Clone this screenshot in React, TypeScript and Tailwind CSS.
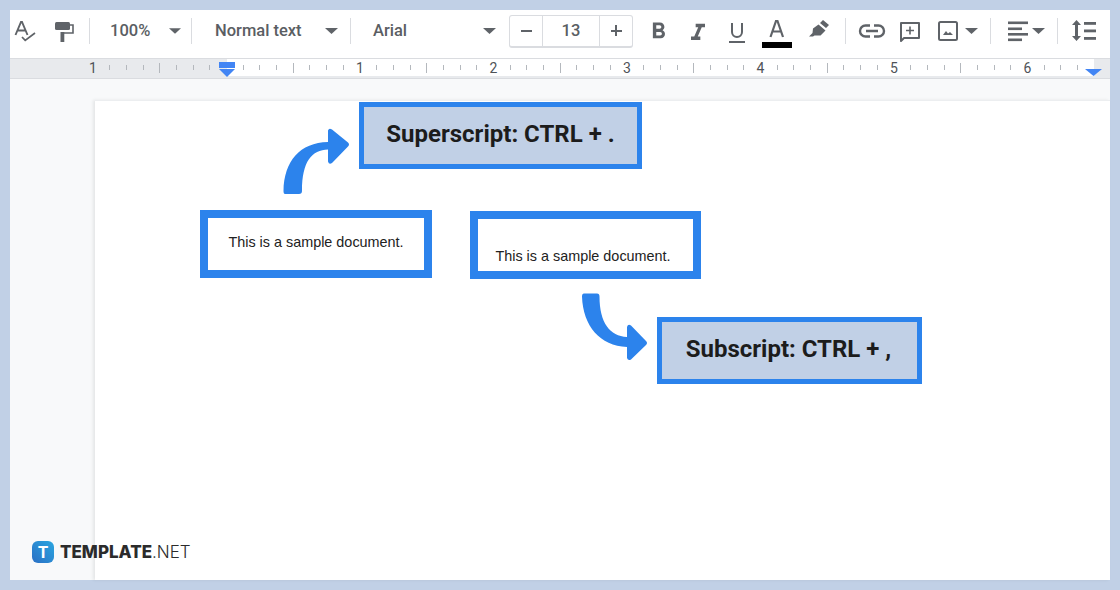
import React from "react";
import { MdFormatBold, MdFormatItalic } from "react-icons/md";

const G = "#5f6368";

function Icon({ x, w, className, children }: { x: number; w: number; className: string; children: React.ReactNode }) {
  return (
    <svg viewBox={`${x} 18 ${w} 26`} width={w} height={26} className={`shrink-0 ${className}`} fill={G} stroke="none">
      {children}
    </svg>
  );
}

function Divider({ className }: { className: string }) {
  return <div className={`h-[26px] w-px shrink-0 bg-[#dadce0] ${className}`} />;
}

function Caret({ className }: { className: string }) {
  return (
    <svg viewBox="0 0 13 6" width={13} height={6} className={`shrink-0 ${className}`} fill={G}>
      <path d="M0 0h13L6.5 6z" />
    </svg>
  );
}

function Label({ children, className }: { children: React.ReactNode; className: string }) {
  return (
    <span className={`shrink-0 whitespace-nowrap font-['Roboto',sans-serif] text-[16.5px] font-medium leading-none text-[#5a5e63] ${className}`}>
      {children}
    </span>
  );
}

const cells = Array.from({ length: 61 }, (_, i) => i);
const labels: Record<number, string> = { 0: "1", 16: "1", 24: "2", 32: "3", 40: "4", 48: "5", 56: "6" };

function Ruler() {
  return (
    <div className="relative h-[21px] shrink-0 border-y border-[#dadce0] bg-[#e8eaed]">
      <div className="absolute left-[217px] top-0 h-[17px] w-[867px] bg-white" />
      <div className="relative flex h-[17px] items-center pl-[74.6px]">
        {cells.map((i) => (
          <div key={i} className="flex h-full w-[16.69px] shrink-0 items-center justify-center">
            {labels[i] ? (
              <span className="font-['Roboto',sans-serif] text-[14px] leading-none text-[#4f5358]">{labels[i]}</span>
            ) : i === 8 || i === 60 ? null : i % 4 === 0 ? (
              <div className="h-[10px] w-px bg-[#b4b8bd]" />
            ) : (
              <div className="h-[5px] w-px bg-[#b4b8bd]" />
            )}
          </div>
        ))}
      </div>
      <svg viewBox="0 0 16 15" width={16} height={15} className="absolute left-[209px] top-[3px]" fill="#4285f4">
        <path d="M0 0h16v6H0zM0 7h16l-8 8z" />
      </svg>
      <svg viewBox="0 0 17 7" width={17} height={7} className="absolute left-[1075px] top-[10px]" fill="#4285f4">
        <path d="M0 0h17l-8.500 7z" />
      </svg>
    </div>
  );
}

function Toolbar() {
  return (
    <div className="flex h-[48px] shrink-0 items-center bg-white pb-[6px]">
      <Icon x={14} w={24} className="ml-[4px]">
        <path d="M15.5 35L21 22h1l5.500 13M17.500 30.500h8" fill="none" stroke={G} strokeWidth="1.9" />
        <path d="M22 37l3.200 3.400L35 33" fill="none" stroke={G} strokeWidth="1.7" />
      </Icon>
      <Icon x={52} w={24} className="ml-[14px]">
        <rect x="55" y="22" width="15" height="8" rx="1.500" />
        <path d="M70 25h3v8H62" fill="none" stroke={G} strokeWidth="1.600" />
        <rect x="60.500" y="32" width="3.800" height="10" />
      </Icon>
      <Divider className="ml-[13px]" />
      <Label className="ml-[20px] w-[42px]">100%</Label>
      <Caret className="ml-[17px] w-[12px]" />
      <Divider className="ml-[10px]" />
      <Label className="ml-[23px] w-[88px]">Normal text</Label>
      <Caret className="ml-[22px]" />
      <Divider className="ml-[12px]" />
      <Label className="ml-[22px] w-[35px]">Arial</Label>
      <Caret className="ml-[75px]" />
      <div className="ml-[13px] flex h-[33px] w-[124px] shrink-0 items-center rounded-[3px] border border-b-2 border-[#dadce0]">
        <div className="flex h-full w-[33px] items-center justify-center border-r border-[#dadce0]">
          <div className="h-[2px] w-[11px] bg-[#5f6368]" />
        </div>
        <div className="flex h-full w-[57px] items-center justify-center border-r border-[#dadce0]">
          <Label className="mt-[2px]">13</Label>
        </div>
        <div className="relative flex h-full flex-1 items-center justify-center">
          <div className="h-[2px] w-[11px] bg-[#5f6368]" />
          <div className="absolute h-[11px] w-[2px] bg-[#5f6368]" />
        </div>
      </div>
      <MdFormatBold size={27} color={G} className="ml-[12px] shrink-0" />
      <MdFormatItalic size={28} color={G} className="ml-[12px] mt-[3px] shrink-0" />
      <Icon x={729} w={16} className="ml-[17px]">
        <path d="M732 23v9a5 5 0 0 0 10 0v-9" fill="none" stroke={G} strokeWidth="2" />
        <rect x="729" y="41" width="16" height="2" />
      </Icon>
      <svg viewBox="762 18 30 30" width={30} height={30} className="ml-[17px] mt-[4px] shrink-0">
        <path d="M770.500 37L776 21h1.500l5.500 16M772.500 31.500h9" fill="none" stroke={G} strokeWidth="2.200" />
        <rect x="762" y="42" width="30" height="6" fill="#000" />
      </svg>
      <Icon x={806} w={26} className="ml-[14px]">
        <path d="M823 20l6 5-3 3-6-5zM818.500 24.500l7 6-5 5h-6l-1.500 1h-4l3.500-3.500.5-4.500z" />
      </Icon>
      <Divider className="ml-[13px]" />
      <Icon x={858} w={28} className="ml-[12px]">
        <path d="M870 25.500h-4.500a5.500 5.500 0 0 0 0 11H870M874 25.500h4.500a5.500 5.500 0 0 1 0 11H874M866 31h12" fill="none" stroke={G} strokeWidth="2.400" />
      </Icon>
      <Icon x={898} w={24} className="ml-[12px]">
        <path d="M901 23h18v15h-15l-3 3z" fill="none" stroke={G} strokeWidth="2" strokeLinejoin="round" />
        <path d="M910 26.500v8M906 30.500h8" fill="none" stroke={G} strokeWidth="1.600" />
      </Icon>
      <Icon x={936} w={24} className="ml-[14px]">
        <rect x="939" y="22" width="18" height="18" rx="1.500" fill="none" stroke={G} strokeWidth="2" />
        <path d="M943 35l3-4 2 2.500 2-1.500 3 3z" />
      </Icon>
      <Caret className="ml-[5px]" />
      <Divider className="ml-[12px]" />
      <Icon x={1006} w={24} className="ml-[15px]">
        <rect x="1008" y="21.500" width="20" height="2.600" />
        <rect x="1008" y="27.500" width="14" height="2.600" />
        <rect x="1008" y="33" width="20" height="2.600" />
        <rect x="1008" y="38.500" width="14" height="2.600" />
      </Icon>
      <Caret className="ml-[2px]" />
      <Divider className="ml-[12px]" />
      <Icon x={1070} w={28} className="ml-[12px]">
        <path d="M1072 25l4.500-5 4.500 5h-3v11h3l-4.500 5-4.500-5h3V25z" />
        <rect x="1084" y="22" width="12" height="2.800" />
        <rect x="1084" y="29.500" width="12" height="2.800" />
        <rect x="1084" y="37" width="12" height="2.800" />
      </Icon>
    </div>
  );
}

function Callout({ className, children }: { className: string; children: React.ReactNode }) {
  return (
    <div className={`absolute flex items-center justify-center border-[#2c83ec] font-['Roboto',sans-serif] ${className}`}>
      {children}
    </div>
  );
}

export default function App() {
  return (
    <div className="flex h-[590px] w-[1120px] flex-col overflow-hidden bg-[#c1d0e6] p-[10px]">
      <Toolbar />
      <Ruler />
      <div className="flex min-h-0 flex-1 flex-col bg-[#f8f9fa] pl-[85px] pt-[21px]">
        <div className="relative flex-1 border-t border-[#eceef0] bg-white shadow-[-2px_0_3px_rgba(60,64,67,0.1)]">
          <Callout className="left-[264px] top-[1px] h-[67px] w-[283px] border-[5px] bg-[#c1d0e6] text-[24px] font-bold text-[#1c1c1c]">
            <span className="-mt-[4px] whitespace-nowrap">Superscript: CTRL + .</span>
          </Callout>
          <Callout className="left-[105px] top-[109px] h-[68px] w-[232px] border-[8px] bg-white">
            <span className="-mt-[2px] whitespace-nowrap font-['Liberation_Sans',sans-serif] text-[14.4px] text-[#222]">This is a sample document.</span>
          </Callout>
          <Callout className="left-[375px] top-[110px] h-[68px] w-[231px] border-[8px] bg-white">
            <span className="mr-[5px] mt-[24px] whitespace-nowrap font-['Liberation_Sans',sans-serif] text-[14.4px] text-[#222]">This is a sample document.</span>
          </Callout>
          <Callout className="left-[562px] top-[216px] h-[67px] w-[265px] border-[5px] bg-[#c1d0e6] text-[24px] font-bold text-[#1c1c1c]">
            <span className="-mt-[4px] mr-[2px] whitespace-nowrap">Subscript: CTRL + ,</span>
          </Callout>
          <svg viewBox="95 100 1015 480" width={1015} height={480} className="pointer-events-none absolute left-0 top-0">
            <path
              d="M285 193Q283.500 193 283.500 190C284 160 300 141.500 328 141V129.500Q329 126.500 332 128.500L348 141.500Q350 143.500 348 145.500L332 162Q329 164 328 160.500V148.500C312 149 302 160 302 190Q302 193 299 193Z"
              fill="#2c83ec"
            />
            <path
              d="M584 292.500Q582 292.500 582 295.500C583 325 600 345 627 346V357Q628 360 631 358.500L646 344Q648 342 646 340L631 324.500Q628 322.500 627 326V336C610 335 599.500 322 599.500 295.500Q599.500 292.500 597 292.500Z"
              fill="#2c83ec"
            />
          </svg>
          <div className="absolute left-[-63px] top-[440px] flex items-center gap-[6px]">
            <div className="flex h-[22px] w-[22px] items-center justify-center rounded-[6px] bg-gradient-to-tr from-[#2a6fc4] to-[#2ba6e0] font-['Inter',sans-serif] text-[16px] font-bold leading-none text-white">
              T
            </div>
            <span className="font-['Inter',sans-serif] text-[17px] font-extrabold leading-none text-[#2b2b2b]">
              TEMPLATE<span className="font-light">.NET</span>
            </span>
          </div>
        </div>
      </div>
    </div>
  );
}
